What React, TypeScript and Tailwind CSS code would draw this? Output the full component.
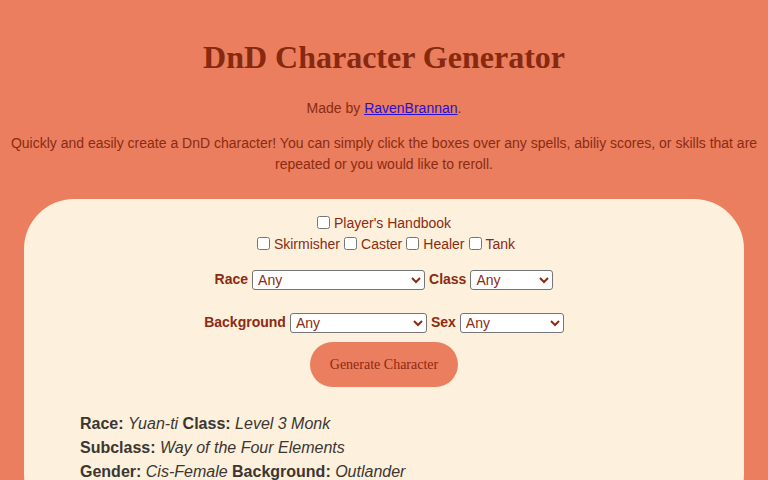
import React, { useState } from 'react';

const roles = ['Skirmisher', 'Caster', 'Healer', 'Tank'];

const selectCls =
  'h-5 bg-white border border-[#767676] rounded-[3px] px-[1px] text-[14px] text-[#8b2b12] appearance-auto';

const App: React.FC = () => {
  const [race, setRace] = useState('Any');
  const [cls, setCls] = useState('Any');
  const [bg, setBg] = useState('Any');
  const [sex, setSex] = useState('Any');

  return (
    <div className="min-h-[480px] bg-[#ea7e5e] text-[#8b2b12] font-['Liberation_Sans',Arial,sans-serif] text-[14px] overflow-hidden">
      <h1 className="pt-[37px] text-center font-['Liberation_Serif',serif] font-bold text-[32px] leading-[40px] text-[#86290f]">
        DnD Character Generator
      </h1>

      <p className="mt-[21px] text-center leading-[21px]">
        Made by{' '}
        <a href="#" className="underline text-[#2b0fd4]">
          RavenBrannan
        </a>
        .
      </p>

      <p className="mt-[14px] px-[8px] text-center leading-[21px]">
        Quickly and easily create a DnD character! You can simply click the boxes over any spells, abiliy scores, or
        skills that are repeated or you would like to reroll.
      </p>

      {/* main panel */}
      <div className="mx-[24px] mt-[24px] rounded-[50px] bg-[#fdf0dc] pt-[14px] pb-[40px]">
        <div className="text-center leading-[21px] pr-[4px]">
          <label>
            <input type="checkbox" className="ml-[4px] mr-[4px] align-[-1px]" />
            Player's Handbook
          </label>
        </div>
        <div className="text-center leading-[21px]">
          {roles.map((r) => (
            <label key={r}>
              <input type="checkbox" className="ml-[4px] mr-[4px] align-[-1px]" />
              {r}
            </label>
          ))}
        </div>

        <div className="mt-[14px] flex justify-center items-center gap-[4px]">
          <span className="font-bold">Race</span>
          <select value={race} onChange={(e) => setRace(e.target.value)} className={`${selectCls} w-[173px]`}>
            <option>Any</option>
          </select>
          <span className="font-bold">Class</span>
          <select value={cls} onChange={(e) => setCls(e.target.value)} className={`${selectCls} w-[83px]`}>
            <option>Any</option>
          </select>
        </div>

        <div className="mt-[22px] flex justify-center items-center gap-[4px]">
          <span className="font-bold">Background</span>
          <select value={bg} onChange={(e) => setBg(e.target.value)} className={`${selectCls} w-[137px]`}>
            <option>Any</option>
          </select>
          <span className="font-bold">Sex</span>
          <select value={sex} onChange={(e) => setSex(e.target.value)} className={`${selectCls} w-[104px]`}>
            <option>Any</option>
          </select>
        </div>

        <div className="mt-[9px] flex justify-center">
          <button className="w-[148px] h-[45px] rounded-full bg-[#ea7e5e] text-[#8b2b12] font-['Liberation_Serif',serif] text-[14px]">
            Generate Character
          </button>
        </div>

        {/* rolled character */}
        <div className="mt-[25px] px-[56px] text-[16px] leading-[24px] text-[#3b3632]">
          <div>
            <b>Race:</b> <i>Yuan-ti</i> <b>Class:</b> <i>Level 3 Monk</i>
          </div>
          <div>
            <b>Subclass:</b> <i>Way of the Four Elements</i>
          </div>
          <div>
            <b>Gender:</b> <i>Cis-Female</i> <b>Background:</b> <i>Outlander</i>
          </div>
        </div>
      </div>
    </div>
  );
};

export default App;
